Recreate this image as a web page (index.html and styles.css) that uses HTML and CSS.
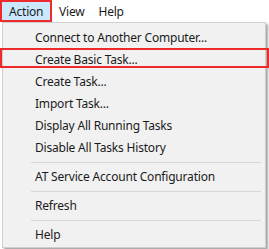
FILE: index.html
```html
<!DOCTYPE html>
<html>
<head>
<meta charset="utf-8">
<link rel="stylesheet" href="styles.css">
</head>
<body>
<div class="menubar">
  <div class="top-item active">Action</div>
  <div class="top-item">View</div>
  <div class="top-item">Help</div>
</div>
<div class="dropdown">
  <div class="item">Connect to Another Computer...</div>
  <div class="item marked">Create Basic Task...</div>
  <div class="item">Create Task...</div>
  <div class="item">Import Task...</div>
  <div class="item">Display All Running Tasks</div>
  <div class="item">Disable All Tasks History</div>
  <div class="sep"></div>
  <div class="item">AT Service Account Configuration</div>
  <div class="sep"></div>
  <div class="item">Refresh</div>
  <div class="sep"></div>
  <div class="item">Help</div>
</div>
</body>
</html>
```
FILE: styles.css
```css
html, body {
  margin: 0;
  padding: 0;
  background: #ffffff;
  width: 269px;
  height: 249px;
  overflow: hidden;
  font-family: "Noto Sans", "Open Sans", sans-serif;
  font-size: 12px;
  letter-spacing: -0.2px;
  color: #1b1b1b;
}
.menubar {
  display: flex;
  height: 22px;
  background: #ffffff;
}
.top-item {
  display: flex;
  align-items: center;
  padding: 0 7px;
  height: 22px;
  box-sizing: border-box;
}
.top-item.active {
  background: #cce8ff;
  border: 2px solid #ee2a2a;
  width: 52px;
  padding: 0 0 0 7px;
}
.dropdown {
  margin-left: 2px;
  width: 264px;
  box-sizing: border-box;
  background: #f1f1f1;
  border: 1px solid #cfcfcf;
  padding: 4px 2px 0 2px;
  height: 226px;
  box-shadow: 2px 2px 2px rgba(0,0,0,0.35);
}
.item {
  height: 22px;
  box-sizing: border-box;
  display: flex;
  align-items: center;
  padding-left: 30px;
  padding-bottom: 1px;
  position: relative;
}
.item.marked::after {
  content: "";
  position: absolute;
  left: -5px;
  right: -6px;
  top: -1px;
  height: 20px;
  border: 2px solid #ee2a2a;
  box-sizing: border-box;
}
.sep {
  height: 7px;
  display: flex;
  align-items: center;
  padding-left: 26px;
  padding-right: 2px;
}
.sep::before {
  content: "";
  flex: 1;
  height: 1px;
  background: #d7d7d7;
}
```
